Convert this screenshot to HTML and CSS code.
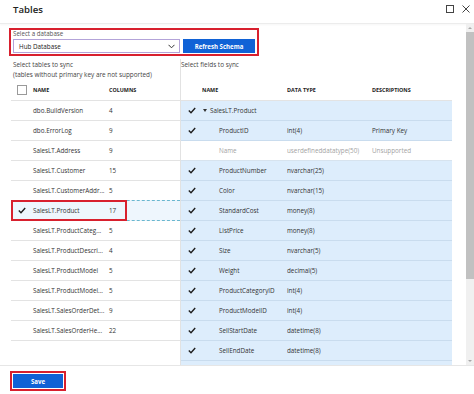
FILE: index.html
```html
<!DOCTYPE html>
<html lang="en">
<head>
<meta charset="utf-8">
<title>Tables</title>
<link rel="stylesheet" href="styles.css">
</head>
<body>
<div class="window">
  <header class="titlebar">
    <h1 class="title">Tables</h1>
    <div class="winctl">
      <svg class="ico-max" width="8" height="8" viewBox="0 0 8 8"><rect x="0.5" y="0.5" width="7" height="7" fill="none" stroke="#444" stroke-width="1"/></svg>
      <svg class="ico-close" width="8" height="8" viewBox="0 0 8 8"><path d="M0.5 0.5 L7.5 7.5 M7.5 0.5 L0.5 7.5" stroke="#444" stroke-width="1" fill="none"/></svg>
    </div>
  </header>

  <div class="body">
    <div class="content">
      <div class="dbpick">
        <div class="dbfield">
          <div class="dblabel">Select a database</div>
          <div class="select">
            <span>Hub Database</span>
            <svg width="7" height="5" viewBox="0 0 7 5"><path d="M0.5 0.8 L3.5 3.8 L6.5 0.8" fill="none" stroke="#333" stroke-width="1"/></svg>
          </div>
        </div>
        <button class="btn refresh">Refresh Schema</button>
      </div>

      <div class="panels">
        <section class="left">
          <div class="caption">Select tables to sync<br>(tables without primary key are not supported)</div>
          <div class="ltable">
            <div class="lrow lhead">
              <div class="lcheck"><span class="cbox"></span></div>
              <div class="lname">NAME</div>
              <div class="lcols">COLUMNS</div>
            </div>
            <div class="lrow"><div class="lcheck"></div><div class="lname">dbo.BuildVersion</div><div class="lcols">4</div></div>
            <div class="lrow"><div class="lcheck"></div><div class="lname">dbo.ErrorLog</div><div class="lcols">9</div></div>
            <div class="lrow"><div class="lcheck"></div><div class="lname">SalesLT.Address</div><div class="lcols">9</div></div>
            <div class="lrow"><div class="lcheck"></div><div class="lname">SalesLT.Customer</div><div class="lcols">15</div></div>
            <div class="lrow"><div class="lcheck"></div><div class="lname">SalesLT.CustomerAddr...</div><div class="lcols">5</div></div>
            <div class="lrow selected">
              <div class="lcheck"><svg class="chk" width="8" height="7" viewBox="0 0 8 7"><path d="M0.8 3.6 L3 5.8 L7.2 1" fill="none" stroke="#1e1e1e" stroke-width="1.4"/></svg></div>
              <div class="lname">SalesLT.Product</div><div class="lcols">17</div>
              <span class="redmark"></span>
            </div>
            <div class="lrow"><div class="lcheck"></div><div class="lname">SalesLT.ProductCateg...</div><div class="lcols">5</div></div>
            <div class="lrow"><div class="lcheck"></div><div class="lname">SalesLT.ProductDescri...</div><div class="lcols">4</div></div>
            <div class="lrow"><div class="lcheck"></div><div class="lname">SalesLT.ProductModel</div><div class="lcols">5</div></div>
            <div class="lrow"><div class="lcheck"></div><div class="lname">SalesLT.ProductModel...</div><div class="lcols">5</div></div>
            <div class="lrow"><div class="lcheck"></div><div class="lname">SalesLT.SalesOrderDet...</div><div class="lcols">9</div></div>
            <div class="lrow"><div class="lcheck"></div><div class="lname">SalesLT.SalesOrderHe...</div><div class="lcols">22</div></div>
          </div>
        </section>

        <section class="right">
          <div class="caption">Select fields to sync</div>
          <div class="rtable">
            <div class="rrow rhead">
              <div class="rcheck"></div>
              <div class="rname">NAME</div>
              <div class="rtype">DATA TYPE</div>
              <div class="rdesc">DESCRIPTIONS</div>
            </div>
            <div class="rrow on">
              <div class="rcheck"><svg class="chk" width="8" height="7" viewBox="0 0 8 7"><path d="M0.8 3.6 L3 5.8 L7.2 1" fill="none" stroke="#1e1e1e" stroke-width="1.4"/></svg></div>
              <div class="rname group"><span class="tri"></span>SalesLT.Product</div>
              <div class="rtype"></div><div class="rdesc"></div>
            </div>
            <div class="rrow on">
              <div class="rcheck"><svg class="chk" width="8" height="7" viewBox="0 0 8 7"><path d="M0.8 3.6 L3 5.8 L7.2 1" fill="none" stroke="#1e1e1e" stroke-width="1.4"/></svg></div>
              <div class="rname field">ProductID</div><div class="rtype">int(4)</div><div class="rdesc">Primary Key</div>
            </div>
            <div class="rrow off">
              <div class="rcheck"></div>
              <div class="rname field">Name</div><div class="rtype">userdefineddatatype(50)</div><div class="rdesc">Unsupported</div>
            </div>
            <div class="rrow on">
              <div class="rcheck"><svg class="chk" width="8" height="7" viewBox="0 0 8 7"><path d="M0.8 3.6 L3 5.8 L7.2 1" fill="none" stroke="#1e1e1e" stroke-width="1.4"/></svg></div>
              <div class="rname field">ProductNumber</div><div class="rtype">nvarchar(25)</div><div class="rdesc"></div>
            </div>
            <div class="rrow on">
              <div class="rcheck"><svg class="chk" width="8" height="7" viewBox="0 0 8 7"><path d="M0.8 3.6 L3 5.8 L7.2 1" fill="none" stroke="#1e1e1e" stroke-width="1.4"/></svg></div>
              <div class="rname field">Color</div><div class="rtype">nvarchar(15)</div><div class="rdesc"></div>
            </div>
            <div class="rrow on">
              <div class="rcheck"><svg class="chk" width="8" height="7" viewBox="0 0 8 7"><path d="M0.8 3.6 L3 5.8 L7.2 1" fill="none" stroke="#1e1e1e" stroke-width="1.4"/></svg></div>
              <div class="rname field">StandardCost</div><div class="rtype">money(8)</div><div class="rdesc"></div>
            </div>
            <div class="rrow on">
              <div class="rcheck"><svg class="chk" width="8" height="7" viewBox="0 0 8 7"><path d="M0.8 3.6 L3 5.8 L7.2 1" fill="none" stroke="#1e1e1e" stroke-width="1.4"/></svg></div>
              <div class="rname field">ListPrice</div><div class="rtype">money(8)</div><div class="rdesc"></div>
            </div>
            <div class="rrow on">
              <div class="rcheck"><svg class="chk" width="8" height="7" viewBox="0 0 8 7"><path d="M0.8 3.6 L3 5.8 L7.2 1" fill="none" stroke="#1e1e1e" stroke-width="1.4"/></svg></div>
              <div class="rname field">Size</div><div class="rtype">nvarchar(5)</div><div class="rdesc"></div>
            </div>
            <div class="rrow on">
              <div class="rcheck"><svg class="chk" width="8" height="7" viewBox="0 0 8 7"><path d="M0.8 3.6 L3 5.8 L7.2 1" fill="none" stroke="#1e1e1e" stroke-width="1.4"/></svg></div>
              <div class="rname field">Weight</div><div class="rtype">decimal(5)</div><div class="rdesc"></div>
            </div>
            <div class="rrow on">
              <div class="rcheck"><svg class="chk" width="8" height="7" viewBox="0 0 8 7"><path d="M0.8 3.6 L3 5.8 L7.2 1" fill="none" stroke="#1e1e1e" stroke-width="1.4"/></svg></div>
              <div class="rname field">ProductCategoryID</div><div class="rtype">int(4)</div><div class="rdesc"></div>
            </div>
            <div class="rrow on">
              <div class="rcheck"><svg class="chk" width="8" height="7" viewBox="0 0 8 7"><path d="M0.8 3.6 L3 5.8 L7.2 1" fill="none" stroke="#1e1e1e" stroke-width="1.4"/></svg></div>
              <div class="rname field">ProductModelID</div><div class="rtype">int(4)</div><div class="rdesc"></div>
            </div>
            <div class="rrow on">
              <div class="rcheck"><svg class="chk" width="8" height="7" viewBox="0 0 8 7"><path d="M0.8 3.6 L3 5.8 L7.2 1" fill="none" stroke="#1e1e1e" stroke-width="1.4"/></svg></div>
              <div class="rname field">SellStartDate</div><div class="rtype">datetime(8)</div><div class="rdesc"></div>
            </div>
            <div class="rrow on">
              <div class="rcheck"><svg class="chk" width="8" height="7" viewBox="0 0 8 7"><path d="M0.8 3.6 L3 5.8 L7.2 1" fill="none" stroke="#1e1e1e" stroke-width="1.4"/></svg></div>
              <div class="rname field">SellEndDate</div><div class="rtype">datetime(8)</div><div class="rdesc"></div>
            </div>
            <div class="rrow on partial"></div>
          </div>
        </section>
      </div>
    </div>

    <div class="scrollbar">
      <div class="sb-arrow up"></div>
      <div class="sb-thumb"></div>
      <div class="sb-track"></div>
      <div class="sb-arrow down"></div>
    </div>
  </div>

  <footer class="footer">
    <div class="savebox"><button class="btn save">Save</button></div>
  </footer>
</div>
</body>
</html>
```

FILE: styles.css
```css
* { box-sizing: border-box; }

html, body {
  margin: 0;
  padding: 0;
  background: #fff;
}

body {
  width: 474px;
  height: 394px;
  overflow: hidden;
  font-family: "Open Sans", "Noto Sans", sans-serif;
  font-size: 6.3px;
  color: #333;
}

.window {
  display: flex;
  flex-direction: column;
  width: 474px;
  height: 394px;
}

/* title bar */
.titlebar {
  height: 24px;
  flex: none;
  display: flex;
  align-items: flex-start;
  justify-content: space-between;
  padding: 0 4px 0 13px;
  border-bottom: 1px solid #ececec;
  box-shadow: 0 1px 2px rgba(0, 0, 0, 0.04);
}

.title {
  margin: 0;
  font-size: 9.6px;
  font-weight: 600;
  line-height: 14px;
  padding-top: 3px;
  color: #222;
}

.winctl {
  display: flex;
  gap: 8px;
  padding-top: 5px;
}

.winctl svg { display: block; }

/* body */
.body {
  flex: 1;
  display: flex;
  min-height: 0;
}

.content {
  width: 466px;
  display: flex;
  flex-direction: column;
  min-height: 0;
}

/* database picker */
.dbpick {
  margin: 4px 0 0 9px;
  width: 250px;
  height: 28px;
  border: 2px solid #d8202e;
  display: flex;
  align-items: flex-end;
  gap: 3px;
  padding: 0 2px 1px 2px;
}

.dblabel {
  font-size: 6.2px;
  line-height: 8px;
  color: #555;
  margin-bottom: 1px;
}

.select {
  width: 167px;
  height: 14px;
  border: 1px solid #b3a3d9;
  display: flex;
  align-items: center;
  justify-content: space-between;
  padding: 0 4px 0 5px;
  font-size: 6.3px;
  color: #222;
}

.select svg { display: block; }

.btn {
  font-family: inherit;
  border: none;
  background: #1062d6;
  color: #fff;
  font-weight: 700;
  font-size: 6.1px;
  padding: 0;
  margin: 0;
}

.refresh {
  width: 72px;
  height: 14px;
}

/* panels */
.panels {
  margin-top: 3px;
  flex: 1;
  min-height: 0;
  display: flex;
  overflow: hidden;
}

.caption {
  height: 21px;
  padding-top: 1px;
  line-height: 10px;
  font-size: 6.4px;
  color: #444;
}

.left {
  width: 181px;
  flex: none;
  border-right: 1px solid #e2e2e2;
}

.left .caption { padding-left: 13px; }

.ltable { margin-left: 11px; }

.lrow {
  position: relative;
  height: 20px;
  display: flex;
  align-items: center;
  border-bottom: 1px solid #e3e3e3;
}

.lhead {
  height: 21px;
  font-weight: 700;
  font-size: 5.4px;
  color: #222;
}

.lcheck {
  width: 22px;
  flex: none;
  display: flex;
  align-items: center;
  justify-content: center;
}

.cbox {
  width: 10px;
  height: 10px;
  border: 1px solid #9a9a9a;
  background: #fff;
}

.lname {
  width: 76px;
  flex: none;
  white-space: nowrap;
}

.lcols { flex: 1; }

.lrow.selected {
  background: #eef6fd;
  border-top: 1px dashed #6ab7cf;
  border-bottom: 1px dashed #6ab7cf;
  margin-top: -1px;
  height: 21px;
}

.chk { display: block; }

.redmark {
  position: absolute;
  left: 0;
  top: -1px;
  width: 116px;
  height: 21px;
  border: 2px solid #d8202e;
}

/* right panel */
.right {
  flex: 1;
  min-width: 0;
}

.rtable { width: 271px; }

.rrow {
  height: 20px;
  display: flex;
  align-items: center;
  border-bottom: 1px solid #c9dcee;
  white-space: nowrap;
}

.rrow.on { background: #ddedfc; }

.rrow.off {
  background: #fff;
  color: #a3a3a3;
  border-bottom-color: #d7e3ee;
}

.rhead {
  height: 21px;
  background: #fff;
  font-weight: 700;
  font-size: 5.4px;
  color: #222;
  border-bottom-color: #e3e3e3;
}

.rcheck {
  width: 21px;
  flex: none;
  display: flex;
  justify-content: center;
}

.rname {
  width: 85px;
  flex: none;
  overflow: hidden;
}

.rname.field { padding-left: 17px; }

.rname.group {
  display: flex;
  align-items: center;
  padding-left: 1px;
}

.tri {
  width: 0;
  height: 0;
  border-left: 2.5px solid transparent;
  border-right: 2.5px solid transparent;
  border-top: 3.5px solid #333;
  margin-right: 3px;
}

.rtype {
  width: 85px;
  flex: none;
  overflow: hidden;
}

.rdesc { flex: 1; }

/* scrollbar */
.scrollbar {
  width: 8px;
  flex: none;
  display: flex;
  flex-direction: column;
  padding-top: 1px;
  background: #f0f0f0;
}

.sb-arrow {
  height: 7px;
  flex: none;
  position: relative;
}

.sb-arrow::after {
  content: "";
  position: absolute;
  left: 2px;
  top: 2px;
  border-left: 2px solid transparent;
  border-right: 2px solid transparent;
}

.sb-arrow.up::after { border-bottom: 2px solid #a8a8a8; }
.sb-arrow.down::after { border-top: 2px solid #a8a8a8; }

.sb-thumb {
  height: 247px;
  flex: none;
  background: #c1c1c1;
}

.sb-track {
  flex: 1;
  background: #f0f0f0;
}

/* footer */
.footer {
  height: 29px;
  flex: none;
  border-top: 1px solid #e6e6e6;
  padding: 5px 0 0 10px;
}

.savebox {
  width: 56px;
  height: 20px;
  border: 2px solid #d8202e;
  padding: 1px;
}

.save {
  display: block;
  width: 100%;
  height: 100%;
}
```
